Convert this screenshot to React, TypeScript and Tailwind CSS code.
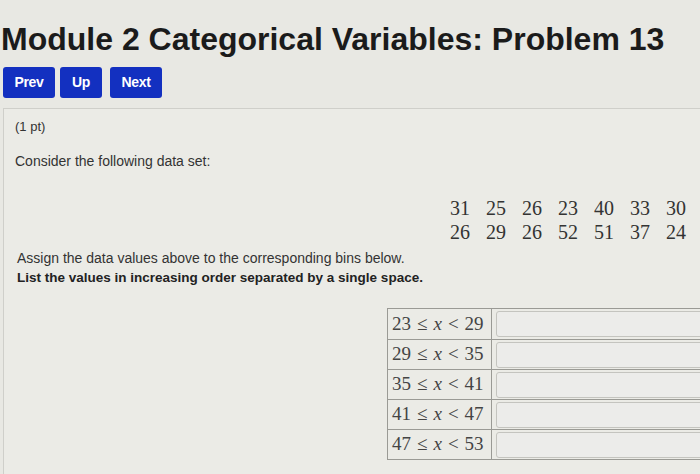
const bins = [
  ["23", "29"],
  ["29", "35"],
  ["35", "41"],
  ["41", "47"],
  ["47", "53"],
]

const row1 = ["31", "25", "26", "23", "40", "33", "30"]
const row2 = ["26", "29", "26", "52", "51", "37", "24"]

export default function App() {
  return (
    <div className="w-[700px] h-[474px] overflow-hidden bg-[#e8e8e3] font-['Liberation_Sans',Arial,sans-serif] text-[#222]">
      {/* Title */}
      <h1 className="pl-[1px] pt-[20px] text-[32px] leading-[38px] font-bold text-[#1b1b1b] whitespace-nowrap">
        Module 2 Categorical Variables: Problem 13
      </h1>

      {/* Nav buttons */}
      <div className="flex gap-[5px] pl-[3px] mt-[9px]">
        <button className="w-[52px] h-[31px] bg-[#1330c0] text-white text-[14px] font-bold rounded-[3px] tracking-[-0.3px]">Prev</button>
        <button className="w-[42px] h-[31px] bg-[#1330c0] text-white text-[14px] font-bold rounded-[3px] tracking-[-0.3px]">Up</button>
        <button className="w-[52px] h-[31px] bg-[#1330c0] text-white text-[14px] font-bold rounded-[3px] tracking-[-0.3px] ml-[3px]">Next</button>
      </div>

      {/* Problem panel */}
      <div className="mt-[10px] ml-[3px] border-t border-l border-[#cfcfca] bg-[#ebebe6] h-[400px] pl-[11px] pt-[10px]">
        <p className="text-[13px] leading-[16px] text-[#333]">(1 pt)</p>
        <p className="mt-[18px] text-[14px] leading-[16px] text-[#333]">Consider the following data set:</p>

        <div className="flex justify-end pr-[14px] mt-[27px]">
          <div className="font-['Liberation_Serif','Times_New_Roman',serif] text-[20px] leading-[24px] text-[#333]">
            <div className="flex gap-[16px]">
              {row1.map((n, i) => (
                <span key={i}>{n}</span>
              ))}
            </div>
            <div className="flex gap-[16px]">
              {row2.map((n, i) => (
                <span key={i}>{n}</span>
              ))}
            </div>
          </div>
        </div>

        <p className="mt-[4px] pl-[2px] text-[14px] leading-[20px] text-[#333]">
          Assign the data values above to the corresponding bins below.
        </p>
        <p className="pl-[2px] text-[13.5px] leading-[20px] font-bold text-[#222]">
          List the values in increasing order separated by a single space.
        </p>

        {/* Bins table */}
        <div className="mt-[20px] ml-[372px] border border-[#9a9a95] w-[320px]">
          {bins.map(([a, b], i) => (
            <div key={i} className={`flex h-[30px] ${i > 0 ? "border-t border-[#9a9a95]" : ""}`}>
              <div className="w-[104px] shrink-0 border-r border-[#9a9a95] flex items-center pl-[4px] font-['Liberation_Serif','Times_New_Roman',serif] text-[19px] text-[#444] whitespace-nowrap">
                {a}
                <span className="mx-[6px]">≤</span>
                <i>x</i>
                <span className="mx-[6px]">&lt;</span>
                {b}
              </div>
              <div className="flex-1 flex items-center pl-[4px]">
                <input
                  type="text"
                  className="w-full h-[26px] bg-[#ececea] border border-[#c4c4bf] rounded-[3px] focus:outline-none"
                />
              </div>
            </div>
          ))}
        </div>
      </div>
    </div>
  )
}
